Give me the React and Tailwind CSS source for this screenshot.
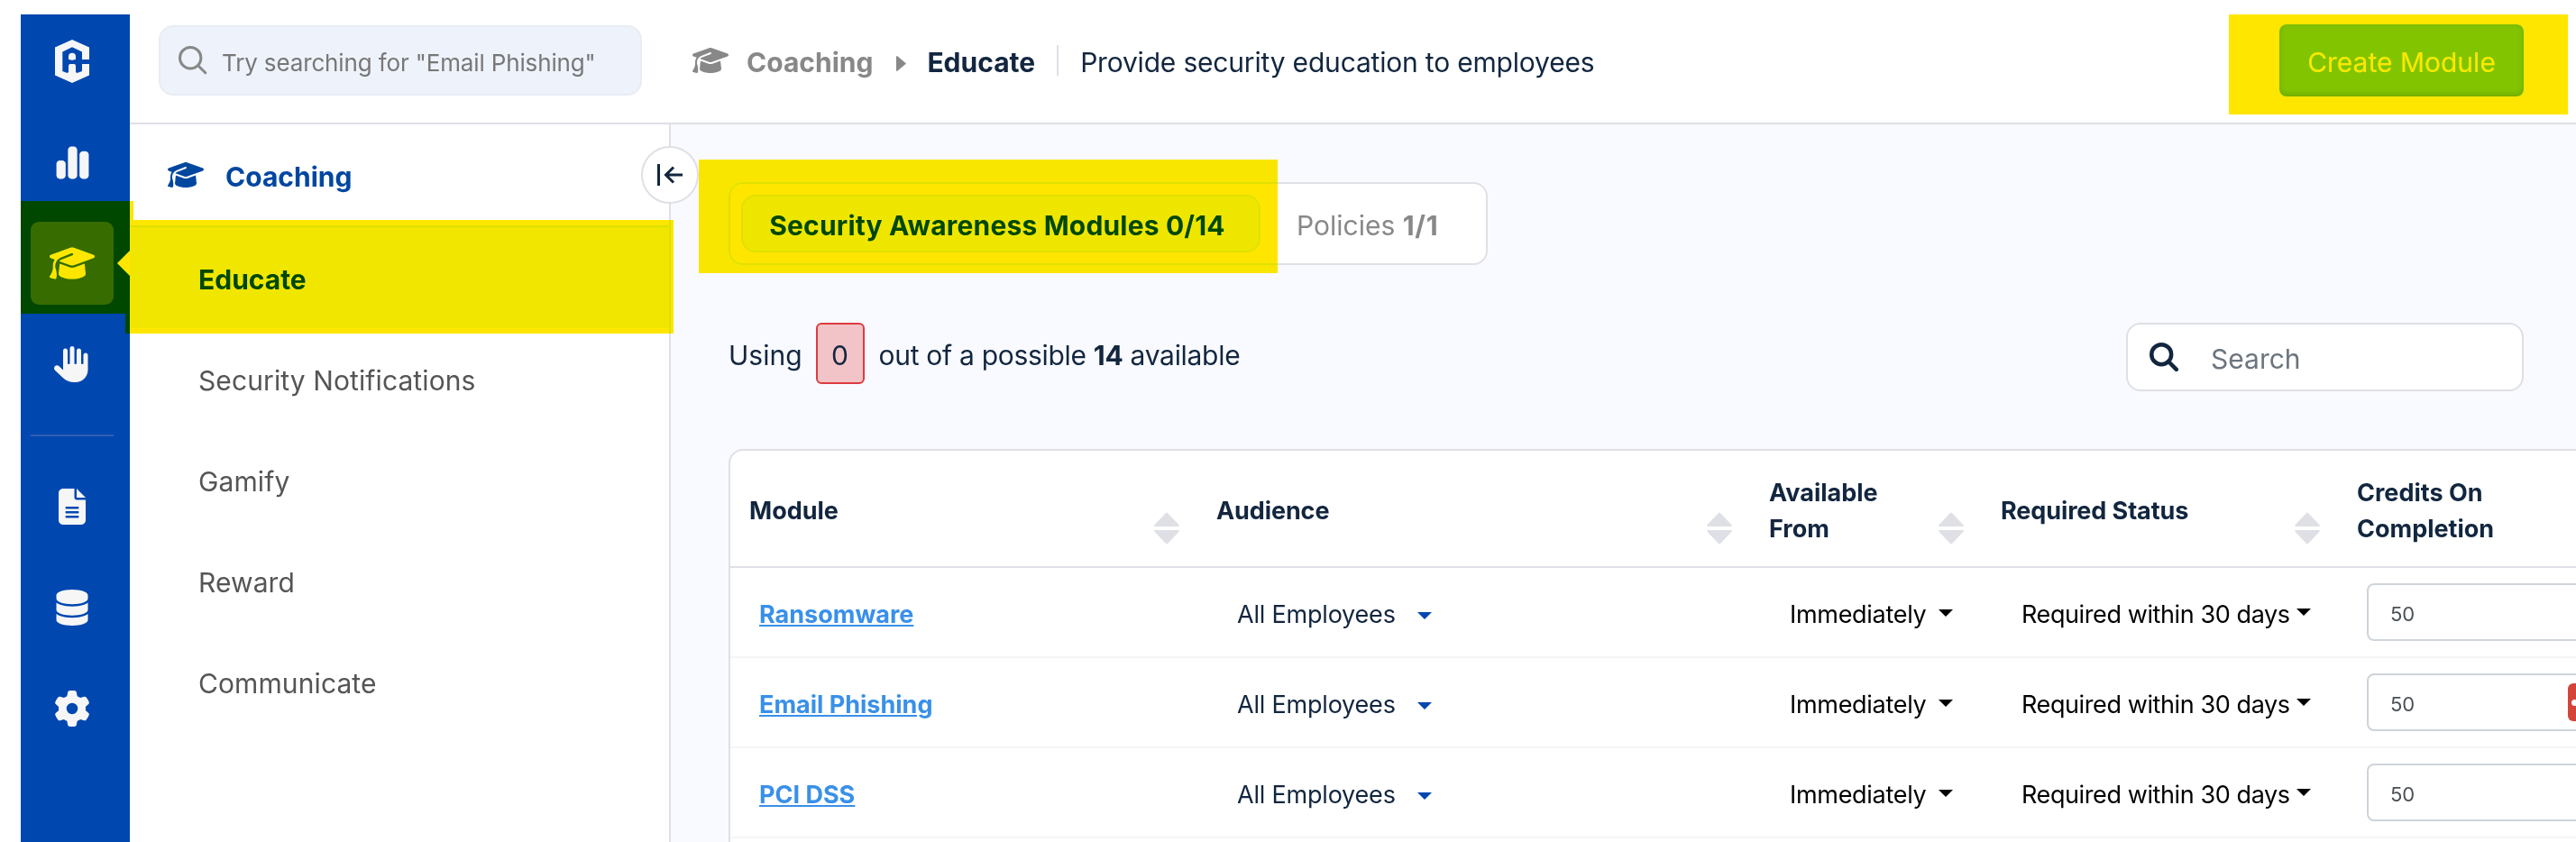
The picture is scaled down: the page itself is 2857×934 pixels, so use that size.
import {
  FaChartSimple,
  FaDatabase,
  FaFileLines,
  FaGear,
  FaGraduationCap,
  FaHand,
} from "react-icons/fa6";

const modules = [
  { name: "Ransomware", credits: 50 },
  { name: "Email Phishing", credits: 50, flagged: true },
  { name: "PCI DSS", credits: 50 },
];

const menuItems = ["Security Notifications", "Gamify", "Reward", "Communicate"];

const Logo = () => (
  <svg width="38" height="48" viewBox="0 0 38 48">
    <path
      fill="#f6f6f6"
      fillRule="evenodd"
      d="M19 0 38 8.5V22H30V13.5L19 8.2 8.3 13.5V35L13.5 37 15 36V29q0-2 2-2h4q2 0 2 2v7l1.5 1L30 35V27H38V39.5L19 48 0 39.5V8.5Z"
    />
    <circle cx="19" cy="18.7" r="4" fill="#f6f6f6" />
    <path d="M15 19h8v3h-8z" fill="#f6f6f6" />
  </svg>
);

const SearchIcon = ({ color, width }) => (
  <svg
    width="32"
    height="32"
    viewBox="0 0 32 32"
    fill="none"
    stroke={color}
    strokeWidth={width}
    strokeLinecap="round"
    className="shrink-0"
  >
    <circle cx="13.2" cy="13.2" r={13.2 - width / 2} />
    <path d="M22.5 22.5 29.8 29.8" />
  </svg>
);

const Caret = ({ className }) => (
  <svg width="16" height="8" viewBox="0 0 16 8" className={className}>
    <path d="M0 0H16L8 8Z" fill="currentColor" />
  </svg>
);

const SortIcon = () => (
  <svg
    width="28"
    height="36"
    viewBox="0 0 28 36"
    fill="#dfe0e6"
    className="absolute right-5 top-[68px]"
  >
    <path d="M12.8 1.2q1.2-1.4 2.4 0L27.4 14q1.2 2-.8 2H1.4q-2 0-.8-2Z" />
    <path d="M12.8 34.8q1.2 1.4 2.4 0L27.4 22q1.2-2-.8-2H1.4q-2 0-.8 2Z" />
  </svg>
);

const NavItem = ({ children }) => (
  <div className="relative flex h-28 w-full items-center justify-center pr-[7px]">
    {children}
  </div>
);

const HeadCell = ({ children, sortable = true }) => (
  <div className="relative flex items-center pt-[6px] pl-[21px] text-[27px] leading-10 font-bold">
    {children}
    {sortable && <SortIcon />}
  </div>
);

const Highlight = ({ className }) => (
  <div className={`absolute bg-[#ffe600] mix-blend-darken ${className}`} />
);

export default function App() {
  return (
    <div className="relative isolate flex h-[934px] w-[2857px] overflow-hidden bg-white pt-4 pl-[23px] font-[Inter,sans-serif] text-[30px] text-[#12263f]">
      <nav className="flex w-[121px] shrink-0 flex-col bg-[#0047b0] text-[#f6f6f6]">
        <div className="flex h-[108px] justify-center pt-7 pr-[7px]">
          <Logo />
        </div>
        <NavItem>
          <FaChartSimple size={41} />
        </NavItem>
        <NavItem>
          <div className="flex h-[92px] w-[92px] items-center justify-center rounded-[9px] bg-[#376cc0] text-white">
            <FaGraduationCap size={50} />
          </div>
          <svg width="14" height="28" viewBox="0 0 14 28" className="absolute right-0">
            <path d="M14 0V28L0 14Z" fill="#fff" />
          </svg>
        </NavItem>
        <NavItem>
          <FaHand size={40} />
        </NavItem>
        <div className="my-[22px] ml-[11px] h-0.5 w-[92px] bg-[#315fb4]" />
        <NavItem>
          <FaFileLines size={40} />
        </NavItem>
        <NavItem>
          <FaDatabase size={40} />
        </NavItem>
        <NavItem>
          <FaGear size={40} />
        </NavItem>
      </nav>

      <div className="flex min-w-0 flex-1 flex-col">
        <header className="flex h-[122px] shrink-0 items-center border-b-2 border-[#dfe0e6] pr-[58px] pb-[18px] pl-8">
          <div className="flex h-[78px] w-[536px] items-center rounded-2xl border-2 border-[#e8ecf4] bg-[#eef3fb] pl-5 text-[26px] text-[#777]">
            <SearchIcon color="#888" width={3} />
            <span className="ml-4 pt-1 tracking-[-0.14px]">
              Try searching for "Email Phishing"
            </span>
          </div>
          <FaGraduationCap size={40} className="ml-14 text-[#888]" />
          <span className="ml-5 pt-1 font-bold text-[#888]">Coaching</span>
          <svg width="11" height="17" viewBox="0 0 11 17" className="mt-1.5 ml-[26px] text-[#888]">
            <path d="M1 0 11 8.5 1 17Q0 17 0 16V1Q0 0 1 0Z" fill="currentColor" />
          </svg>
          <span className="ml-[23px] pt-1 font-bold">Educate</span>
          <div className="ml-6 h-[34px] w-0.5 bg-[#dfe0e6]" />
          <span className="ml-6 pt-1 tracking-[-0.19px]">
            Provide security education to employees
          </span>
          <button className="ml-auto h-20 w-[271px] rounded-lg bg-[#82c43c] pt-1 text-white shadow-[inset_0_-2px_6px_rgba(0,0,0,0.15)]">
            Create Module
          </button>
        </header>

        <div className="flex min-h-0 flex-1">
          <aside className="relative w-[600px] shrink-0 border-r-2 border-[#dfe0e6] text-[#555]">
            <div className="flex h-28 items-center pl-[42px] font-bold text-[#0047a0]">
              <FaGraduationCap size={40} />
              <span className="ml-6 pt-1">Coaching</span>
            </div>
            <div className="flex h-[114px] items-center border-t-2 border-[#dfe0e6] bg-[#f0f3fb] pt-1 pl-[76px] font-bold text-[#0047a0]">
              Educate
            </div>
            {menuItems.map((item) => (
              <div
                key={item}
                className="flex h-28 items-center pt-1 pl-[76px] tracking-[0.1px]"
              >
                {item}
              </div>
            ))}
            <button className="absolute top-6 -right-[33px] flex h-16 w-16 items-center justify-center rounded-full border-2 border-[#dfe0e6] bg-white">
              <svg
                width="28"
                height="24"
                viewBox="0 0 28 24"
                fill="none"
                stroke="#12263f"
                strokeWidth="3"
              >
                <path d="M1.5 0V24M9 12H28M18 3.5 9.5 12 18 20.5" />
              </svg>
            </button>
          </aside>

          <main className="min-w-0 flex-1 overflow-hidden bg-[#f9faff] pt-16 pl-16">
            <div className="flex h-[92px] w-[842px] items-center rounded-2xl border-2 border-[#dfe0e6] bg-white pl-3">
              <div className="flex h-16 w-[576px] items-center justify-center rounded-2xl border-2 border-[#dfe0e6] bg-[#eff3fb] pt-1 pr-2 font-bold tracking-[0.18px] text-[#0047a0]">
                Security Awareness Modules 0/14
              </div>
              <div className="ml-10 pt-1 text-[#888]">
                Policies <b className="tracking-[0.7px]">1/1</b>
              </div>
            </div>

            <div className="mt-16 mr-[58px] flex items-start justify-between">
              <div className="flex h-[68px] items-center">
                <span className="pt-1">Using</span>
                <span className="mr-4 ml-[15px] flex h-[68px] w-[54px] items-center justify-center rounded-md border-2 border-[#dc3c40] bg-[#f3c4c7] pt-1">
                  0
                </span>
                <span className="pt-1 tracking-[-0.3px]">
                  out of a possible <b>14</b> available
                </span>
              </div>
              <div className="flex h-[76px] w-[441px] items-center rounded-2xl border-2 border-[#dfe0e6] bg-white pl-6 text-[#6c757d]">
                <SearchIcon color="#12263f" width={4.5} />
                <span className="ml-9 pt-1">Search</span>
              </div>
            </div>

            <div className="mt-16 h-[500px] w-[2200px] rounded-2xl border-2 border-[#dfe0e6] bg-white">
              <div className="grid h-[130px] grid-cols-[518px_613px_257px_395px_417px] border-b-2 border-[#dfe0e6]">
                <HeadCell>Module</HeadCell>
                <HeadCell>
                  <span className="tracking-[-0.1px]">Audience</span>
                </HeadCell>
                <HeadCell>
                  <span className="w-[130px]">Available From</span>
                </HeadCell>
                <HeadCell>
                  <span className="tracking-[-0.1px]">Required Status</span>
                </HeadCell>
                <HeadCell sortable={false}>
                  <span className="w-40">Credits On Completion</span>
                </HeadCell>
              </div>
              {modules.map((m) => (
                <div
                  key={m.name}
                  className="grid h-[100px] grid-cols-[518px_613px_257px_395px_417px] items-center border-b-2 border-[#f5f5f7] text-[27px]"
                >
                  <a className="pt-[7px] pl-8 font-bold text-[#3990e8] underline">{m.name}</a>
                  <div className="flex items-center pt-[7px] pl-11">
                    <span className="tracking-[-0.2px]">All Employees</span>
                    <Caret className="ml-6 text-[#0047b0]" />
                  </div>
                  <div className="flex items-center pt-[7px] pl-11 text-black">
                    <span className="tracking-[-0.3px]">Immediately</span>
                    <Caret className="mb-1.5 ml-3.5" />
                  </div>
                  <div className="flex items-center pt-[7px] pl-11 text-black">
                    <span className="tracking-[-0.4px]">Required within 30 days</span>
                    <Caret className="mb-2 ml-[7px]" />
                  </div>
                  <div className="relative pl-8">
                    <div className="flex h-16 w-[360px] items-center rounded-lg border-2 border-[#ced4da] bg-white pt-1 pl-6 text-[22px] text-[#495057]">
                      {m.credits}
                    </div>
                    {m.flagged && (
                      <div className="absolute top-[11px] left-[255px] flex h-[42px] w-[46px] items-center rounded-md bg-[#d44439] pl-1">
                        <div className="h-[7px] w-[7px] rounded-full bg-white" />
                      </div>
                    )}
                  </div>
                </div>
              ))}
            </div>
          </main>
        </div>
      </div>

      <Highlight className="top-[223px] left-[23px] h-[125px] w-[125px]" />
      <Highlight className="top-[244px] left-[139px] h-[126px] w-[608px]" />
      <Highlight className="top-[177px] left-[775px] h-[126px] w-[642px]" />
      <Highlight className="top-4 left-[2472px] h-[111px] w-[376px]" />
    </div>
  );
}
